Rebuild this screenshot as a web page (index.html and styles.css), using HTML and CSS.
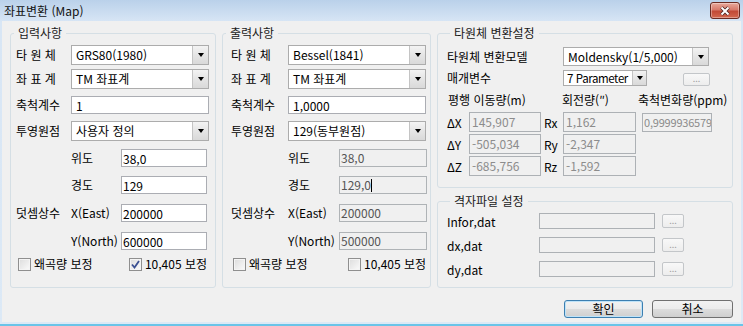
FILE: index.html
```html
<!DOCTYPE html>
<html lang="ko">
<head>
    <meta charset="UTF-8">
    <title>좌표변환 (Map)</title>
    <link rel="stylesheet" href="styles.css">
</head>
<body>
    <div class="window">
        <!-- Title bar -->
        <div class="titlebar">
            <span class="title">좌표변환 (Map)</span>
            <button class="close-btn" type="button" aria-label="닫기">
                <svg width="14" height="10" viewBox="0 0 14 10">
                    <path d="M3.5 1.5 L10.5 8.5 M10.5 1.5 L3.5 8.5" stroke="#4b2420" stroke-width="3.6" fill="none"/>
                    <path d="M3.5 1.5 L10.5 8.5 M10.5 1.5 L3.5 8.5" stroke="#fff" stroke-width="2" fill="none"/>
                </svg>
            </button>
        </div>

        <div class="client">
            <!-- Input settings -->
            <fieldset class="group">
                <legend>입력사항</legend>
                <div class="form form-in">
                    <span class="lbl">타 원 체</span>
                    <div class="select span"><span class="val">GRS80(1980)</span><i class="arrow"></i></div>
                    <span class="lbl">좌 표 계</span>
                    <div class="select span"><span class="val">TM 좌표계</span><i class="arrow"></i></div>
                    <span class="lbl s">축척계수</span>
                    <input class="field span" type="text" value="1">
                    <span class="lbl">투영원점</span>
                    <div class="select span"><span class="val">사용자 정의</span><i class="arrow"></i></div>
                    <span class="lbl s sub">위도</span>
                    <input class="field tight" type="text" value="38,0">
                    <span class="lbl s sub">경도</span>
                    <input class="field tight" type="text" value="129">
                    <span class="lbl s">덧셈상수</span>
                    <span class="lbl s">X(East)</span>
                    <input class="field tight" type="text" value="200000">
                    <span class="lbl s sub">Y(North)</span>
                    <input class="field tight" type="text" value="600000">
                    <div class="checks">
                        <label class="chk first"><i class="box"></i>왜곡량 보정</label>
                        <label class="chk"><i class="box"><svg width="9" height="9" viewBox="0 0 9 9"><path d="M1 4.5 L3.5 7.5 L8 1" stroke="#3a4f91" stroke-width="1.8" fill="none"/></svg></i>10,405 보정</label>
                    </div>
                </div>
            </fieldset>

            <!-- Output settings -->
            <fieldset class="group">
                <legend>출력사항</legend>
                <div class="form form-out">
                    <span class="lbl">타 원 체</span>
                    <div class="select span"><span class="val">Bessel(1841)</span><i class="arrow"></i></div>
                    <span class="lbl">좌 표 계</span>
                    <div class="select span"><span class="val">TM 좌표계</span><i class="arrow"></i></div>
                    <span class="lbl s">축척계수</span>
                    <input class="field span" type="text" value="1,0000">
                    <span class="lbl">투영원점</span>
                    <div class="select span"><span class="val">129(동부원점)</span><i class="arrow"></i></div>
                    <span class="lbl s sub">위도</span>
                    <div class="field tight off">38,0</div>
                    <span class="lbl s sub">경도</span>
                    <div class="field tight off">129,0<i class="caret"></i></div>
                    <span class="lbl s">덧셈상수</span>
                    <span class="lbl s">X(East)</span>
                    <div class="field tight off">200000</div>
                    <span class="lbl s sub">Y(North)</span>
                    <div class="field tight off">500000</div>
                    <div class="checks">
                        <label class="chk first"><i class="box"></i>왜곡량 보정</label>
                        <label class="chk"><i class="box"></i>10,405 보정</label>
                    </div>
                </div>
            </fieldset>

            <div class="side">
                <!-- Ellipsoid transform -->
                <fieldset class="group g-ell">
                    <legend>타원체 변환설정</legend>
                    <div class="erow r1">
                        <span class="elbl">타원체 변환모델</span>
                        <div class="select model"><span class="val">Moldensky(1/5,000)</span><i class="arrow"></i></div>
                    </div>
                    <div class="erow r2">
                        <span class="elbl">매개변수</span>
                        <div class="select param"><span class="val">7 Parameter</span><i class="arrow"></i></div>
                        <button class="dots dots-param" type="button" disabled>...</button>
                    </div>
                    <div class="heads">
                        <span class="h1">평행 이동량(m)</span>
                        <span class="h2">회전량(″)</span>
                        <span>축척변화량(ppm)</span>
                    </div>
                    <div class="prow">
                        <span class="d">ΔX</span>
                        <div class="pin">145,907</div>
                        <span class="r">Rx</span>
                        <div class="pin rot">1,162</div>
                        <div class="pin ppm">0,9999936579</div>
                    </div>
                    <div class="prow">
                        <span class="d">ΔY</span>
                        <div class="pin">-505,034</div>
                        <span class="r">Ry</span>
                        <div class="pin rot">-2,347</div>
                    </div>
                    <div class="prow">
                        <span class="d">ΔZ</span>
                        <div class="pin">-685,756</div>
                        <span class="r">Rz</span>
                        <div class="pin rot">-1,592</div>
                    </div>
                </fieldset>

                <!-- Grid files -->
                <fieldset class="group g-grid">
                    <legend>격자파일 설정</legend>
                    <div class="frow">
                        <span class="flbl">Infor,dat</span>
                        <div class="fpath"></div>
                        <button class="dots" type="button" disabled>...</button>
                    </div>
                    <div class="frow">
                        <span class="flbl">dx,dat</span>
                        <div class="fpath"></div>
                        <button class="dots" type="button" disabled>...</button>
                    </div>
                    <div class="frow">
                        <span class="flbl">dy,dat</span>
                        <div class="fpath"></div>
                        <button class="dots" type="button" disabled>...</button>
                    </div>
                </fieldset>
            </div>

            <div class="actions">
                <button class="btn default" type="button">확인</button>
                <button class="btn cancel" type="button">취소</button>
            </div>
        </div>
    </div>
</body>
</html>
```

FILE: styles.css
```css
/* General */
* {
    box-sizing: border-box;
}

body {
    margin: 0;
    font-family: "Noto Sans CJK KR", "Noto Sans", sans-serif;
    font-size: 12px;
    color: #000;
    background: #fff;
}

button, input {
    font: inherit;
    margin: 0;
}

/* Window frame */
.window {
    width: 743px;
    height: 326px;
    display: flex;
    flex-direction: column;
    padding: 0 2px 2px;
    background: linear-gradient(#bad1ea, #d8e6f5 22px, #dce9f6);
    border-bottom: 2px solid #6ac4e8;
}

.titlebar {
    height: 21px;
    display: flex;
    align-items: flex-start;
    padding-left: 2px;
}

.title {
    line-height: 14px;
    margin-top: 4px;
    color: #111;
}

.close-btn {
    margin-left: auto;
    margin-top: 2px;
    margin-right: 1px;
    width: 30px;
    height: 17px;
    padding: 0;
    border: 1px solid #6b2b22;
    border-radius: 3px;
    background: linear-gradient(#e9a99c, #d7796a 45%, #c24a36 55%, #d4684f);
    box-shadow: inset 0 0 0 1px rgba(255, 255, 255, 0.35);
    display: flex;
    align-items: center;
    justify-content: center;
}

/* Client area */
.client {
    flex: 1;
    background: #f0f0f0;
    display: grid;
    grid-template-columns: 206px 209px 296px;
    grid-template-rows: 262px auto;
    column-gap: 6px;
    padding: 5px 0 0 8px;
    align-content: start;
}

/* Group boxes */
.group {
    margin: 0;
    padding: 0;
    min-width: 0;
    border: 1px solid #d5dfe5;
    border-radius: 3px;
}

.group legend {
    margin-left: 3px;
    padding: 0 4px;
    line-height: 14px;
    color: #1a1a1a;
}

/* Input / output form grid */
.form {
    display: grid;
    grid-template-rows: 24px 27px 25px 28px 27px 28px 28px 25px 14px;
    align-items: start;
    margin-top: 5px;
}

.form-in {
    grid-template-columns: 55px 50px 86px;
    padding-left: 5px;
    --chk-gap: 117px;
}

.form-out {
    grid-template-columns: 57px 51px 88px;
    padding-left: 8px;
    --chk-gap: 115px;
}

.lbl {
    line-height: 20px;
    white-space: nowrap;
}

.lbl.s {
    line-height: 18px;
}

.lbl.sub {
    grid-column: 2;
}

.span {
    grid-column: 2 / 4;
    width: 138px;
}

/* Combo box */
.select {
    height: 20px;
    display: flex;
    background: #fff;
    border: 1px solid #acacac;
}

.select .val {
    flex: 1;
    padding-left: 4px;
    line-height: 18px;
    white-space: nowrap;
    overflow: hidden;
}

.arrow {
    width: 16px;
    position: relative;
    border-left: 1px solid #c4c4c4;
    background: linear-gradient(#f3f3f3, #e5e5e5 50%, #d9d9d9);
}

.arrow::after {
    content: "";
    position: absolute;
    left: 50%;
    top: 50%;
    margin: -2px 0 0 -3px;
    border-left: 3px solid transparent;
    border-right: 3px solid transparent;
    border-top: 4px solid #000;
}

/* Text boxes */
.field {
    height: 18px;
    padding: 0 0 0 4px;
    border: 1px solid #abadb3;
    background: #fff;
    color: #000;
    line-height: 16px;
    outline: none;
    white-space: nowrap;
}

.field.tight {
    padding-left: 1px;
}

.field.off {
    background: #f0f0f0;
    border-color: #afb3b6;
    color: #555;
}

.caret {
    display: inline-block;
    width: 1px;
    height: 13px;
    background: #000;
    vertical-align: -2px;
}

/* Check boxes */
.checks {
    grid-column: 1 / -1;
    display: flex;
    padding-left: 2px;
}

.chk {
    display: flex;
    align-items: center;
    line-height: 14px;
    white-space: nowrap;
}

.chk.first {
    width: var(--chk-gap);
}

.box {
    width: 13px;
    height: 13px;
    margin-right: 3px;
    border: 1px solid #8f8f8f;
    background: linear-gradient(135deg, #dcdcdc, #fbfbfb);
    box-shadow: inset 0 0 0 1px #f4f4f4;
    display: flex;
    align-items: center;
    justify-content: center;
}

/* Right column */
.side {
    display: flex;
    flex-direction: column;
    gap: 6px;
}

.g-ell {
    height: 162px;
    padding: 7px 0 0 9px;
}

.g-grid {
    height: 94px;
    padding: 5px 0 0 9px;
}

.erow {
    display: flex;
    align-items: center;
}

.elbl {
    width: 116px;
    white-space: nowrap;
}

.r1 .select {
    height: 19px;
}

.model {
    width: 146px;
}

.r2 {
    margin-top: 3px;
}

.param {
    width: 84px;
    height: 16px;
}

.param .val {
    line-height: 14px;
    padding-left: 3px;
    font-size: 11.5px;
    letter-spacing: -0.4px;
}

.param .arrow {
    width: 14px;
}

.dots {
    padding: 0;
    border: 1px solid #c3c6c9;
    border-radius: 2px;
    background: linear-gradient(#f8f8f8, #ededed);
    color: #a0a0a0;
    font-size: 9px;
    line-height: 10px;
}

.dots-param {
    width: 27px;
    height: 13px;
    margin-left: 36px;
    margin-top: 3px;
}

.heads {
    display: flex;
    margin-top: 7px;
    padding-left: 1px;
    line-height: 14px;
    white-space: nowrap;
}

.h1 {
    width: 114px;
}

.h2 {
    width: 76px;
}

.prow {
    display: flex;
    align-items: center;
    height: 20px;
    margin-top: 2px;
}

.heads + .prow {
    margin-top: 5px;
}

.d {
    width: 22px;
}

.r {
    width: 22px;
    padding-left: 3px;
}

.pin {
    width: 72px;
    height: 20px;
    padding-left: 2px;
    border: 1px solid #adb1b5;
    color: #8c8c8c;
    line-height: 17px;
    white-space: nowrap;
    overflow: hidden;
}

.pin.rot {
    width: 73px;
}

.pin.ppm {
    width: 70px;
    height: 19px;
    margin-left: 6px;
    padding-left: 1px;
    font-size: 11px;
    letter-spacing: -0.2px;
}

/* Grid file rows */
.frow {
    display: flex;
    align-items: center;
    height: 16px;
    margin-bottom: 8px;
}

.flbl {
    width: 92px;
}

.fpath {
    width: 116px;
    height: 16px;
    border: 1px solid #adb1b5;
    background: #f0f0f0;
}

.frow .dots {
    width: 22px;
    height: 14px;
    margin-left: 7px;
}

/* Dialog buttons */
.actions {
    grid-column: 3;
    display: flex;
    justify-content: flex-end;
    gap: 9px;
    margin-top: 12px;
}

.btn {
    height: 18px;
    padding: 0;
    border: 1px solid #707070;
    border-radius: 3px;
    background: linear-gradient(#f2f2f2, #ebebeb 50%, #dddddd 50%, #cfcfcf);
    line-height: 16px;
    color: #000;
}

.btn.default {
    width: 79px;
    border-color: #3c7fb1;
    box-shadow: inset 0 0 0 1px #bfe3f8;
}

.btn.cancel {
    width: 81px;
}
```
